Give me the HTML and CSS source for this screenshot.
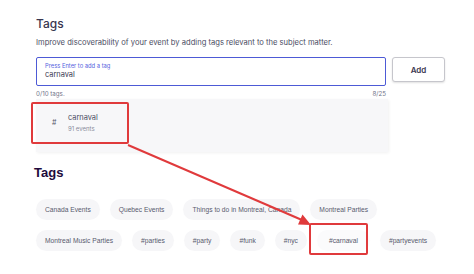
FILE: index.html
```html
<!DOCTYPE html>
<html>
<head>
    <meta charset="UTF-8">
    <title>Tags</title>
    <link rel="stylesheet" href="styles.css">
</head>
<body>
    <div class="page">
        <section class="editor">
            <h2 class="editor-title">Tags</h2>
            <p class="editor-desc">Improve discoverability of your event by adding tags relevant to the subject matter.</p>

            <div class="input-row">
                <div class="tag-input">
                    <label>Press Enter to add a tag</label>
                    <div class="tag-value">carnaval</div>
                </div>
                <button class="add-btn">Add</button>
            </div>

            <div class="counter-row">
                <span>0/10 tags.</span>
                <span>8/25</span>
            </div>

            <div class="suggestions">
                <div class="suggestion">
                    <span class="hash">#</span>
                    <div class="suggestion-text">
                        <div class="suggestion-name">carnaval</div>
                        <div class="suggestion-count">91 events</div>
                    </div>
                </div>
            </div>
        </section>

        <section class="public">
            <h2 class="public-title">Tags</h2>
            <div class="chips">
                <span class="chip">Canada Events</span>
                <span class="chip">Quebec Events</span>
                <span class="chip">Things to do in Montreal, Canada</span>
                <span class="chip">Montreal Parties</span>
                <span class="chip">Montreal Music Parties</span>
                <span class="chip">#parties</span>
                <span class="chip">#party</span>
                <span class="chip">#funk</span>
                <span class="chip">#nyc</span>
                <span class="chip chip-plain">#carnaval</span>
                <span class="chip">#partyevents</span>
            </div>
        </section>
    </div>

    <!-- annotation overlay -->
    <svg class="annotations" width="474" height="274" viewBox="0 0 474 274">
        <rect x="32" y="103" width="96" height="40" rx="1" fill="none" stroke="#e03a3c" stroke-width="2"/>
        <rect x="310" y="224" width="57" height="30" rx="1" fill="none" stroke="#e03a3c" stroke-width="2"/>
        <line x1="128" y1="145" x2="302" y2="220" stroke="#e03a3c" stroke-width="2"/>
        <polygon points="311,225 298,224.5 302.5,214.5" fill="#e03a3c"/>
    </svg>
</body>
</html>
```

FILE: styles.css
```css
* {
    margin: 0;
    padding: 0;
    box-sizing: border-box;
}

body {
    background: #fff;
    font-family: 'Inter', 'Liberation Sans', sans-serif;
    width: 474px;
    height: 274px;
    overflow: hidden;
    position: relative;
}

.page {
    padding: 17px 0 0 36px;
}

.editor {
    width: 352px;
}

.editor-title {
    font-size: 12px;
    font-weight: 500;
    line-height: 14px;
    color: #39364f;
}

.editor-desc {
    margin-top: 7px;
    font-size: 7.6px;
    line-height: 10px;
    color: #4b4d63;
    white-space: nowrap;
}

.input-row {
    display: flex;
    gap: 6px;
    margin-top: 9px;
    width: 410px;
}

.tag-input {
    width: 350px;
    height: 29px;
    border: 1.5px solid #4d5ad6;
    border-radius: 2px;
    padding: 4px 8px 0;
}

.tag-input label {
    display: block;
    font-size: 5.8px;
    line-height: 8px;
    color: #5663de;
}

.tag-value {
    font-size: 7.4px;
    line-height: 10px;
    color: #39364f;
}

.add-btn {
    width: 53px;
    height: 25px;
    background: #fff;
    border: 1px solid #c6c6cc;
    border-radius: 3px;
    box-shadow: 0 1px 2px rgba(0, 0, 0, 0.12);
    font-family: 'Inter', sans-serif;
    font-size: 8px;
    font-weight: 600;
    color: #39364f;
}

.counter-row {
    display: flex;
    justify-content: space-between;
    width: 350px;
    margin-top: 3px;
    font-size: 6.2px;
    line-height: 9px;
    color: #6f7287;
}

.suggestions {
    margin-top: 1px;
    width: 352px;
    height: 53px;
    background: #f7f7f9;
    box-shadow: 1px 1px 3px rgba(0, 0, 0, 0.06);
}

.suggestion {
    display: flex;
    align-items: center;
    height: 47px;
    padding-left: 16px;
}

.hash {
    font-size: 7px;
    color: #585a6e;
    width: 16px;
}

.suggestion-name {
    font-size: 7.4px;
    line-height: 11px;
    color: #4b4d63;
}

.suggestion-count {
    font-size: 6px;
    line-height: 10px;
    color: #8a8c9c;
    margin-top: 1px;
}

.public {
    margin-top: 13px;
}

.public-title {
    font-family: 'Liberation Sans', Arial, sans-serif;
    font-size: 13px;
    font-weight: 700;
    line-height: 16px;
    color: #1e0a3c;
    margin-left: -2px;
}

.chips {
    display: flex;
    flex-wrap: wrap;
    gap: 10px 10px;
    margin-top: 18px;
    width: 420px;
}

.chip {
    display: flex;
    align-items: center;
    height: 21px;
    padding: 0 9px;
    border-radius: 11px;
    background: #f6f6f8;
    font-family: 'Liberation Sans', Arial, sans-serif;
    font-size: 6.7px;
    color: #585a6e;
}

.chip-plain {
    background: #fbfbfc;
    padding: 0 12px;
}

.annotations {
    position: absolute;
    top: 0;
    left: 0;
    pointer-events: none;
}
```
